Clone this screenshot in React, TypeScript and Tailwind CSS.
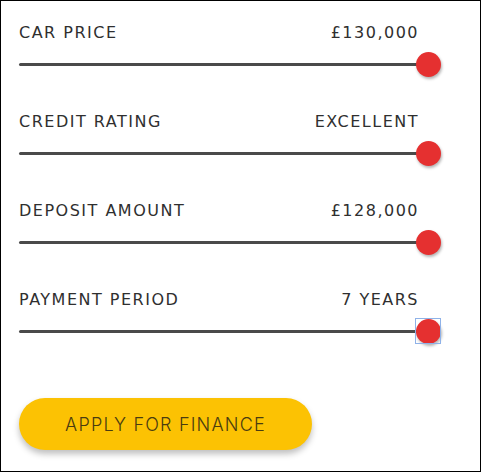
import React from 'react';

// Finance calculator: four maxed-out sliders plus a CTA.
type Row = { label: string; value: string; focused?: boolean };

const rows: Row[] = [
    { label: 'CAR PRICE', value: '£130,000' },
    { label: 'CREDIT RATING', value: 'EXCELLENT' },
    { label: 'DEPOSIT AMOUNT', value: '£128,000' },
    { label: 'PAYMENT PERIOD', value: '7 YEARS', focused: true },
];

function Slider({ focused }: { focused?: boolean }) {
    return (
        <div className="relative h-[26px] flex items-center">
            <div className="h-[3px] w-full bg-[#4a4a4a] rounded-full" />
            <div className="absolute right-[-22px] top-0 w-[26px] h-[26px] grid place-items-center">
                {focused && <div className="absolute inset-0 border border-[#8fb2e8]" />}
                <div className="w-[25px] h-[25px] rounded-full bg-[#e53030] shadow-[1px_2px_3px_rgba(0,0,0,0.3)]" />
            </div>
        </div>
    );
}

export default function App() {
    return (
        <div className="w-[481px] h-[472px] border-[1.5px] border-black bg-white font-['DejaVu_Sans',sans-serif]">
            <div className="w-[400px] ml-[18px] pt-[22px] flex flex-col gap-[35px]">
                {rows.map((r) => (
                    <div key={r.label} className="flex flex-col gap-[8px]">
                        <div className="flex justify-between text-[16px] leading-[20px] tracking-[1.5px] text-[#2f2f2f]">
                            <span>{r.label}</span>
                            <span>{r.value}</span>
                        </div>
                        <Slider focused={r.focused} />
                    </div>
                ))}
            </div>
            <button className="block ml-[18px] mt-[54px] w-[293px] h-[52px] rounded-full bg-[#fcc203] shadow-[0_4px_6px_rgba(0,0,0,0.25)] text-[18px] font-light tracking-[1.2px] text-[#4a3c10] font-['Inter',sans-serif]">
                APPLY FOR FINANCE
            </button>
        </div>
    );
}
